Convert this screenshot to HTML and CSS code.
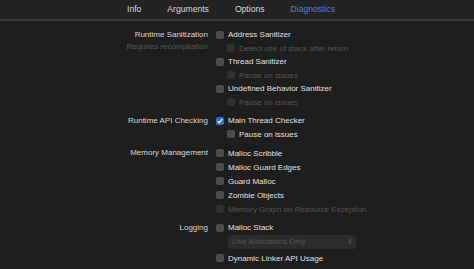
FILE: index.html
```html
<!DOCTYPE html>
<html lang="en">
<head>
    <meta charset="UTF-8">
    <title>Scheme - Diagnostics</title>
    <link rel="stylesheet" href="styles.css">
</head>
<body>
    <nav class="tabs">
        <a href="###">Info</a>
        <a href="###">Arguments</a>
        <a href="###">Options</a>
        <a href="###" class="active">Diagnostics</a>
    </nav>
    <section class="form">
        <div class="section">
            <div class="label">Runtime Sanitization<small>Requires recompilation</small></div>
            <ul class="opts">
                <li><i class="box"></i>Address Sanitizer</li>
                <li class="sub off"><i class="box"></i>Detect use of stack after return</li>
                <li><i class="box"></i>Thread Sanitizer</li>
                <li class="sub off"><i class="box"></i>Pause on issues</li>
                <li><i class="box"></i>Undefined Behavior Sanitizer</li>
                <li class="sub off"><i class="box"></i>Pause on issues</li>
            </ul>
        </div>
        <div class="section">
            <div class="label">Runtime API Checking</div>
            <ul class="opts">
                <li><i class="box on"><svg viewBox="0 0 8 8"><path d="M1.8 4.2 L3.3 5.8 L6.3 1.9" /></svg></i>Main Thread Checker</li>
                <li class="sub"><i class="box"></i>Pause on issues</li>
            </ul>
        </div>
        <div class="section memory">
            <div class="label">Memory Management</div>
            <ul class="opts">
                <li><i class="box"></i>Malloc Scribble</li>
                <li><i class="box"></i>Malloc Guard Edges</li>
                <li><i class="box"></i>Guard Malloc</li>
                <li><i class="box"></i>Zombie Objects</li>
                <li class="off"><i class="box"></i>Memory Graph on Resource Exception</li>
            </ul>
        </div>
        <div class="section">
            <div class="label">Logging</div>
            <ul class="opts">
                <li><i class="box"></i>Malloc Stack</li>
                <li class="popup-row"><div class="popup">Live Allocations Only<span class="arrows">&#8661;</span></div></li>
                <li><i class="box"></i>Dynamic Linker API Usage</li>
            </ul>
        </div>
    </section>
</body>
</html>
```

FILE: styles.css
```css
*{padding: 0;margin: 0;list-style: none;box-sizing: border-box;}
body{background: #1e1e1e;color: #e0e0e0;font-family: "Liberation Sans", Arial, sans-serif;font-size: 8px;width: 474px;height: 269px;overflow: hidden;}
.tabs{display: flex;gap: 26px;height: 21px;padding: 4px 0 0 127px;background: #232323;border-bottom: 2px solid #3a3a3a;}
.tabs a{color: #dadada;text-decoration: none;font-size: 8.6px;line-height: 10px;}
.tabs .active{color: #4a82dc;}
.form{padding-top: 7px;}
.section{display: grid;grid-template-columns: 208px 1fr;column-gap: 8px;}
.section + .section{margin-top: 5px;}
.label{text-align: right;line-height: 13.5px;color: #d6d6d6;}
.label small{display: block;font-size: 8px;color: #575757;line-height: 9px;}
.opts li{display: flex;align-items: center;height: 13.5px;gap: 4px;white-space: nowrap;}
.memory .opts li{height: 14px;}
.opts .sub{padding-left: 11px;}
.opts .off{color: #545454;}
.box{display: block;width: 8px;height: 8px;border-radius: 2px;background: #4c4c4c;flex: none;}
.off .box{background: #303030;}
.box.on{background: #2f6fdc;}
.box svg{display: block;width: 8px;height: 8px;fill: none;stroke: #fff;stroke-width: 1.3;}
.opts .popup-row{height: 17px;align-items: flex-start;padding-left: 12px;}
.popup{display: flex;justify-content: space-between;align-items: center;width: 128px;height: 14px;padding: 0 3px 0 4px;background: #2c2c2c;border-radius: 2px;color: #555;}
.arrows{font-size: 7px;color: #5a5a5a;}
```
